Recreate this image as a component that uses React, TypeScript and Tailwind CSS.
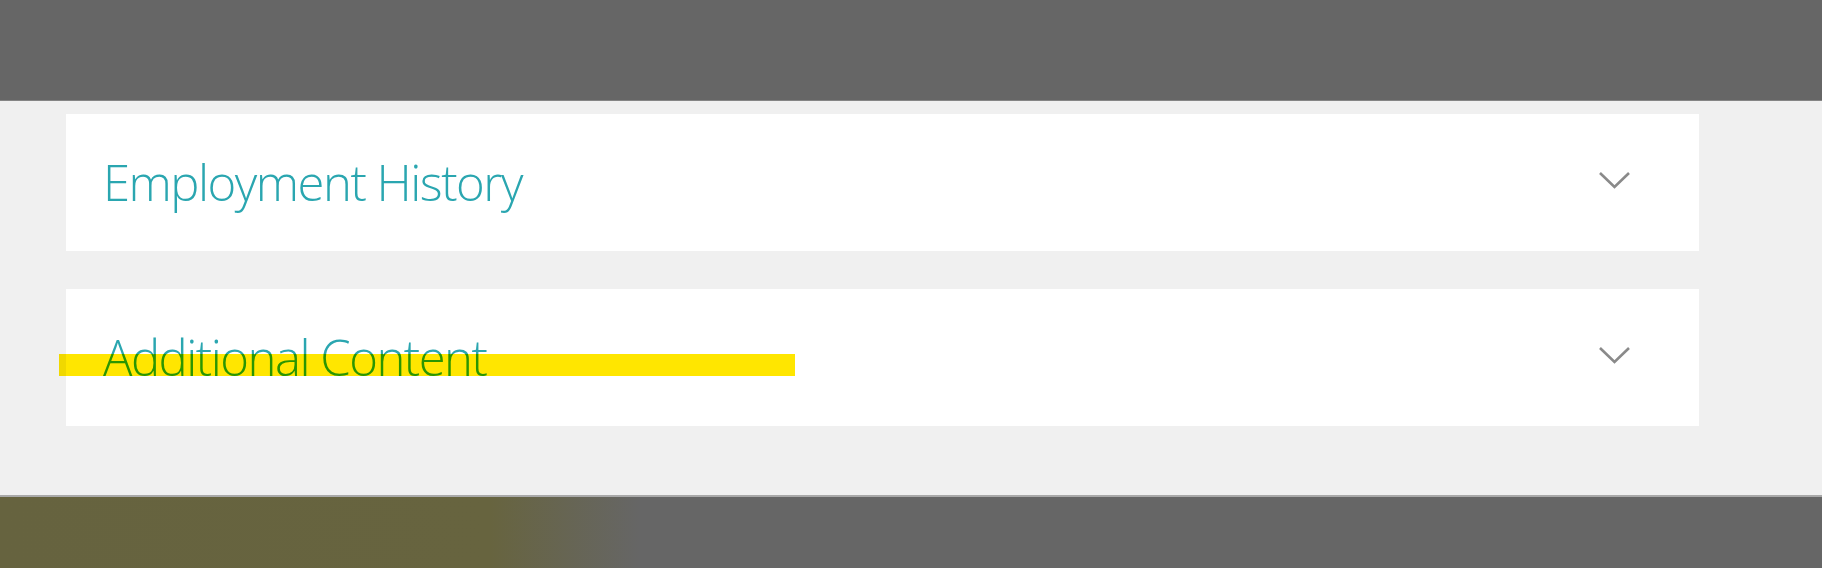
const sections = ["Employment History", "Additional Content"];

function Section({ title }: { title: string }) {
  return (
    <div className="flex h-[137px] items-center justify-between bg-white pl-[37px] pr-[68px]">
      <h2 className="font-['Open_Sans',sans-serif] text-[49px] font-light leading-[65px] tracking-[-1.5px] text-[#2aa6b0]">{title}</h2>
      <svg width="33" height="20" viewBox="0 0 33 20" fill="none" className="mt-[-6px] text-[#8a8a8a]">
        <path d="M2 3 L16.5 17 L31 3" stroke="currentColor" strokeWidth="2.6" />
      </svg>
    </div>
  );
}

export default function App() {
  return (
    <div className="relative flex h-[568px] w-[1822px] flex-col overflow-hidden bg-[#f0f0f0]">
      <div className="h-[101px] shrink-0 border-b border-[#858585] bg-[#666666]" />
      <div className="ml-[66px] mt-[13px] flex w-[1633px] flex-col gap-[38px]">
        {sections.map((s) => (
          <Section key={s} title={s} />
        ))}
      </div>
      <div className="mt-auto h-[73px] shrink-0 border-t-2 border-[#a9a9a9] bg-[linear-gradient(to_right,#66633f_0px,#67643f_490px,#666666_640px,#666666_100%)]" />
      {/* highlight marker over the second heading */}
      <div className="pointer-events-none absolute left-[59px] top-[354px] h-[22px] w-[736px] bg-[#ffe600] mix-blend-multiply" />
    </div>
  );
}
